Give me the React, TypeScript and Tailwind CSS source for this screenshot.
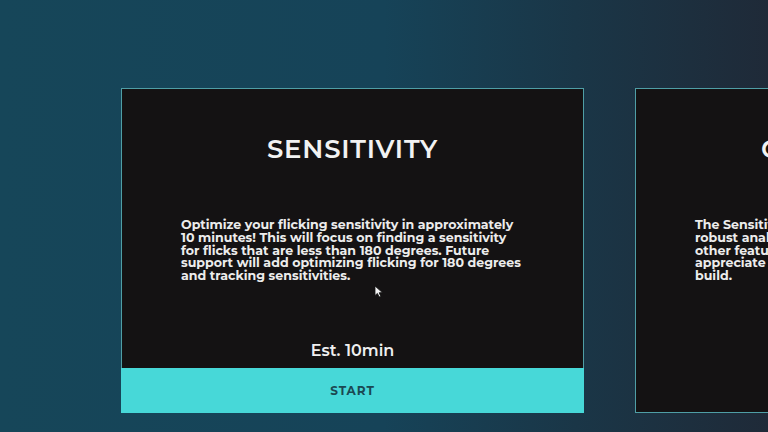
import React from "react";

const font = { fontFamily: '"Montserrat", "Open Sans", "Liberation Sans", sans-serif' };

interface ModeCardProps {
  title: string;
  lines: string[];
  estimate?: string;
  action?: string;
}

function ModeCard({ title, lines, estimate, action }: ModeCardProps) {
  return (
    <div className="relative flex h-[325px] w-[463px] shrink-0 flex-col border border-[#4f9ea5] bg-[#141213]">
      <h2 className="pt-[42px] text-center text-[26px] font-semibold leading-[36px] tracking-[0.03em] text-[#f2f2f2]">
        {title}
      </h2>
      <p className="mt-[52px] pl-[59px] text-[12.6px] font-bold leading-[12.8px] text-[#ececec]">
        {lines.map((line, i) => (
          <span key={i} className="block whitespace-nowrap">
            {line}
          </span>
        ))}
      </p>
      <div className="flex-1" />
      {estimate && (
        <div className="pb-[7px] text-center text-[16px] font-semibold leading-[20px] text-[#efefef]">{estimate}</div>
      )}
      {action && (
        <button className="-mx-px -mb-px flex h-[45px] items-center justify-center bg-[#47d8d8] text-[12px] font-bold tracking-[0.08em] text-[#1b4852]">
          {action}
        </button>
      )}
    </div>
  );
}

export default function App() {
  return (
    <div
      className="relative h-[432px] w-[768px] overflow-hidden bg-[linear-gradient(90deg,#164659_0%,#164358_50%,#1a3647_75%,#1f2a38_100%)]"
      style={font}
    >
      <div className="flex gap-[51px] pl-[121px] pt-[88px]">
        <ModeCard
          title="SENSITIVITY"
          lines={[
            "Optimize your flicking sensitivity in approximately",
            "10 minutes! This will focus on finding a sensitivity",
            "for flicks that are less than 180 degrees. Future",
            "support will add optimizing flicking for 180 degrees",
            "and tracking sensitivities.",
          ]}
          estimate="Est. 10min"
          action="START"
        />
        <ModeCard
          title="COMING SOON"
          lines={[
            "The Sensitivity Finder will soon support more",
            "robust analysis and training. Stay tuned for",
            "other features and improvements. We'd really",
            "appreciate your feedback as we continue to",
            "build.",
          ]}
        />
      </div>

      {/* mouse pointer */}
      <svg className="absolute left-[374px] top-[285px]" width="10" height="13" viewBox="0 0 10 13">
        <path d="M1 1 L1 10.5 L3.4 8.4 L5.2 12 L6.8 11.2 L5.1 7.8 L8.4 7.6 Z" fill="#f4f4f4" stroke="#111" strokeWidth="0.8" />
      </svg>
    </div>
  );
}
